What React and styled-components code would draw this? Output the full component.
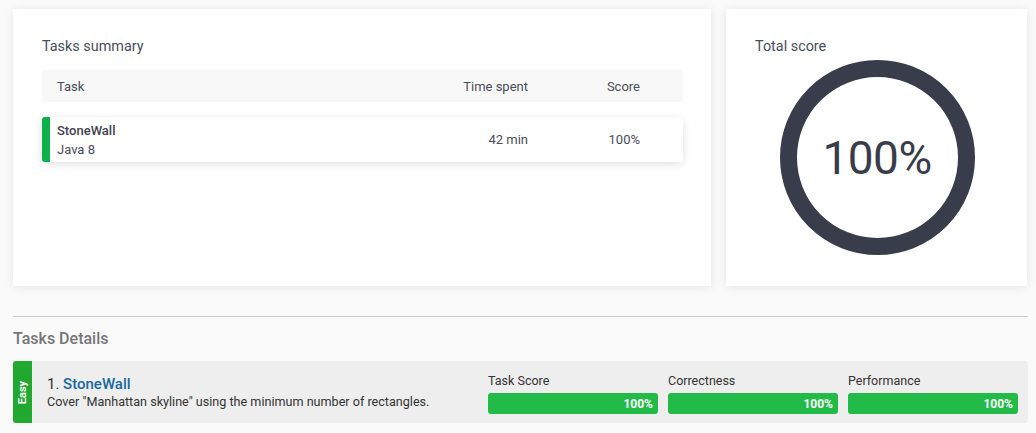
import styled, { createGlobalStyle } from "styled-components";

const Global = createGlobalStyle`
  body {
    margin: 0;
    background: #fafafa;
    font-family: Roboto, "Liberation Sans", sans-serif;
  }
`;

const Page = styled.div`
  padding: 9px 8px 0 13px;
`;

const TopRow = styled.div`
  display: flex;
  gap: 15px;
`;

const Card = styled.div`
  background: #fff;
  width: ${(p) => p.$width}px;
  height: 277px;
  box-sizing: border-box;
  padding: 28px 28px 0 29px;
  box-shadow: 0 1px 10px rgba(0, 0, 0, 0.09);
`;

const CardTitle = styled.div`
  font-size: 14.4px;
  line-height: 20px;
  color: #4a4d5a;
`;

const HeaderRow = styled.div`
  display: flex;
  align-items: center;
  height: 32px;
  margin-top: 13px;
  background: #f8f8f8;
  font-size: 13px;
  color: #4a4d5a;
  padding-right: 43px;
`;

const TaskCol = styled.div`
  flex: 1;
  padding-left: 15px;
`;

const NumCol = styled.div`
  width: ${(p) => p.$width}px;
  text-align: right;
`;

const TaskRow = styled.div`
  display: flex;
  align-items: center;
  height: 45px;
  margin-top: 15px;
  background: #fff;
  border-left: 8px solid #0db14b;
  border-radius: 3px;
  box-shadow: 0 2px 8px rgba(0, 0, 0, 0.13);
  font-size: 13px;
  color: #4a4d5a;
  padding-right: 43px;
`;

const TaskName = styled.div`
  flex: 1;
  padding-left: 7px;
  line-height: 19px;
  b {
    display: block;
    font-weight: 500;
    color: #3f4250;
  }
`;

const Ring = styled.div`
  width: 195px;
  height: 195px;
  margin: 3px auto 0;
  box-sizing: border-box;
  border: 17px solid #393c4b;
  border-radius: 50%;
  display: flex;
  align-items: center;
  justify-content: center;
  font-size: 46px;
  color: #393c4b;
  letter-spacing: -0.5px;
`;

const Divider = styled.hr`
  margin: 30px 0 0;
  border: 0;
  border-top: 1px solid #cdcdcd;
`;

const SectionTitle = styled.div`
  font-size: 16px;
  font-weight: 500;
  color: #757575;
  line-height: 20px;
  margin-top: 12px;
`;

const DetailRow = styled.div`
  display: flex;
  height: 62px;
  margin-top: 12px;
  background: #eeeeee;
  border-radius: 3px;
  overflow: hidden;
`;

const Badge = styled.div`
  width: 19px;
  background: #21a82f;
  display: flex;
  align-items: center;
  justify-content: center;
  span {
    transform: rotate(-90deg);
    color: #fff;
    font-size: 11px;
    font-weight: 700;
  }
`;

const Info = styled.div`
  flex: 1;
  padding-left: 15px;
  display: flex;
  flex-direction: column;
  justify-content: center;
`;

const TaskTitle = styled.div`
  font-size: 15px;
  line-height: 18px;
  color: #333;
  a {
    color: #18689d;
    font-weight: 500;
    text-decoration: none;
  }
`;

const Desc = styled.div`
  font-size: 12.6px;
  line-height: 17px;
  color: #333;
`;

const Metrics = styled.div`
  display: flex;
  gap: 10px;
  padding: 12px 10px 0 0;
`;

const Metric = styled.div`
  width: 170px;
`;

const MetricLabel = styled.div`
  font-size: 12.5px;
  line-height: 15px;
  color: #333;
  margin-bottom: 5px;
`;

const Bar = styled.div`
  height: 21px;
  border-radius: 3px;
  background: #23bb48;
  color: #fff;
  font-size: 12px;
  font-weight: 700;
  display: flex;
  align-items: center;
  justify-content: flex-end;
  padding-right: 5px;
`;

const metrics = ["Task Score", "Correctness", "Performance"];

export default function App() {
  return (
    <Page>
      <Global />
      <TopRow>
        <Card $width={698}>
          <CardTitle>Tasks summary</CardTitle>
          <HeaderRow>
            <TaskCol>Task</TaskCol>
            <NumCol $width={120}>Time spent</NumCol>
            <NumCol $width={112}>Score</NumCol>
          </HeaderRow>
          <TaskRow>
            <TaskName>
              <b>StoneWall</b>
              Java 8
            </TaskName>
            <NumCol $width={120}>42 min</NumCol>
            <NumCol $width={112}>100%</NumCol>
          </TaskRow>
        </Card>
        <Card $width={301}>
          <CardTitle>Total score</CardTitle>
          <Ring>100%</Ring>
        </Card>
      </TopRow>
      <Divider />
      <SectionTitle>Tasks Details</SectionTitle>
      <DetailRow>
        <Badge>
          <span>Easy</span>
        </Badge>
        <Info>
          <TaskTitle>
            1. <a href="#">StoneWall</a>
          </TaskTitle>
          <Desc>Cover "Manhattan skyline" using the minimum number of rectangles.</Desc>
        </Info>
        <Metrics>
          {metrics.map((m) => (
            <Metric key={m}>
              <MetricLabel>{m}</MetricLabel>
              <Bar>100%</Bar>
            </Metric>
          ))}
        </Metrics>
      </DetailRow>
    </Page>
  );
}
